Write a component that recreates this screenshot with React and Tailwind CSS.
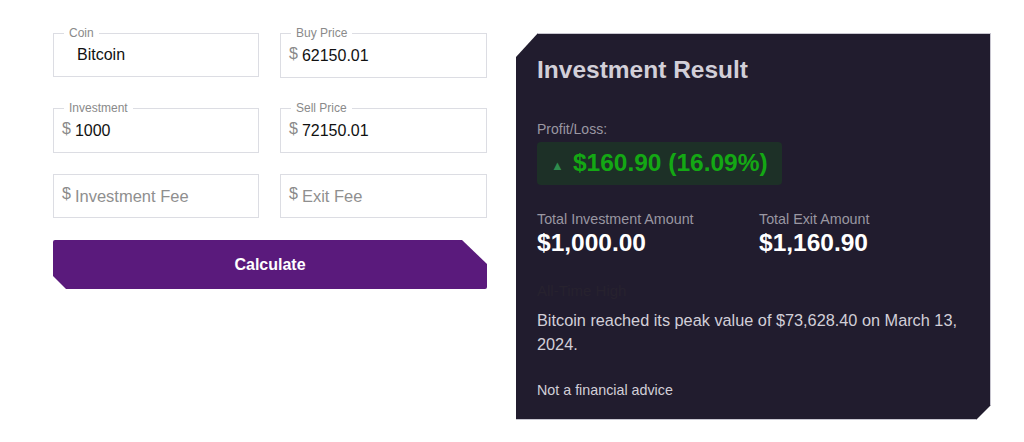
import React from 'react';

function Field({ label, prefix, value, placeholder, indent, h = 'h-[44px]' }) {
  return (
    <div className={`relative ${h} border border-[#dcdde3] px-[8px] flex items-center`}>
      {label && (
        <span className="absolute -top-[8px] left-[10px] bg-white px-[5px] text-[12px] leading-[14px] text-[#8a8a8a]">
          {label}
        </span>
      )}
      {prefix && <span className="text-[16px] text-[#8a8a8a] -mt-[4px] mr-[4px]">$</span>}
      {value ? (
        <span className={`text-[16px] text-[#111] ${indent ? 'pl-[15px]' : ''}`}>{value}</span>
      ) : (
        <span className="text-[16.5px] text-[#8f8f8f]">{placeholder}</span>
      )}
    </div>
  );
}

export default function App() {
  return (
    <div className="w-[1024px] h-[442px] bg-white flex items-start pt-[33px] pl-[53px] gap-[29px] font-['Liberation_Sans',Arial,sans-serif]">
      <div className="w-[434px] flex flex-col">
        <div className="grid grid-cols-[206px_207px] items-start gap-x-[21px]">
          <Field label="Coin" value="Bitcoin" indent />
          <Field label="Buy Price" prefix value="62150.01" h="h-[45px]" />
        </div>
        <div className="grid grid-cols-[206px_207px] gap-x-[21px] mt-[30px]">
          <Field label="Investment" prefix value="1000" h="h-[45px]" />
          <Field label="Sell Price" prefix value="72150.01" h="h-[45px]" />
        </div>
        <div className="grid grid-cols-[206px_207px] gap-x-[21px] mt-[21px]">
          <Field prefix placeholder="Investment Fee" />
          <Field prefix placeholder="Exit Fee" />
        </div>
        <button className="mt-[22px] h-[49px] w-full bg-[#5a1a7c] text-white font-bold text-[16px] rounded-[2px] [clip-path:polygon(0_0,calc(100%-25px)_0,100%_24px,100%_100%,13px_100%,0_calc(100%-13px))]">
          Calculate
        </button>
      </div>

      <div className="w-[475px] h-[387px] bg-[#211c2e] border-t border-r border-b border-[#c8c6d0] [clip-path:polygon(22px_0,100%_0,100%_calc(100%-15px),calc(100%-15px)_100%,0_100%,0_24px)] px-[21px] pt-[21px] flex flex-col">
        <h2 className="text-[24.5px] leading-[30px] font-bold text-[#d2cfd8]">Investment Result</h2>
        <div className="mt-[34px] text-[14px] leading-[20px] text-[#9a97a2]">Profit/Loss:</div>
        <div className="mt-[3px] w-[245px] h-[43px] rounded-[4px] bg-[#1d3027] flex items-center pl-[14px]">
          <span className="text-[13px] text-[#2f8c4e] mr-[9px] mt-[4px]">▲</span>
          <span className="text-[24.5px] font-bold text-[#14a814]">$160.90 (16.09%)</span>
        </div>
        <div className="mt-[24px] flex">
          <div className="w-[222px]">
            <div className="text-[14.3px] leading-[20px] text-[#9a97a2]">Total Investment Amount</div>
            <div className="text-[24.5px] font-bold text-white leading-[28px]">$1,000.00</div>
          </div>
          <div>
            <div className="text-[14.3px] leading-[20px] text-[#9a97a2]">Total Exit Amount</div>
            <div className="text-[24.5px] font-bold text-white leading-[28px]">$1,160.90</div>
          </div>
        </div>
        <div className="mt-[24px] text-[15px] leading-[20px] text-[#27222e]">All-Time High</div>
        <p className="mt-[7px] text-[16.3px] leading-[24px] text-[#d2cfd8]">
          Bitcoin reached its peak value of $73,628.40 on March 13, 2024.
        </p>
        <div className="mt-[24px] text-[14.3px] leading-[20px] text-[#d2cfd8]">Not a financial advice</div>
      </div>
    </div>
  );
}
